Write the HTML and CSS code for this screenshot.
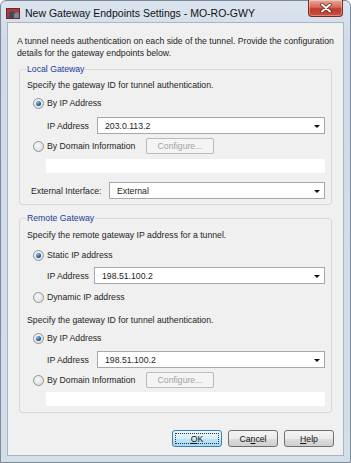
FILE: index.html
```html
<!DOCTYPE html>
<html>
<head>
<meta charset="utf-8">
<link rel="stylesheet" href="styles.css">
</head>
<body>
<div class="window">
  <div class="titlebar">
    <svg class="app-icon" width="14" height="11" viewBox="0 0 14 11">
      <rect x="0" y="0" width="14" height="11" fill="#6a2a2a"/>
      <rect x="1" y="1" width="12" height="9" fill="#a83b3b"/>
      <path d="M3 10 L3 5 L6 3 L9 5 L9 10 Z" fill="#3f4a5a"/>
      <path d="M8 10 L8 6 L11 4 L13 6 L13 10 Z" fill="#7d8896"/>
    </svg>
    <span class="title">New Gateway Endpoints Settings - MO-RO-GWY</span>
    <div class="close-btn">
      <svg width="12" height="10" viewBox="0 0 12 10">
        <path d="M2 1.5 L10 8.5 M10 1.5 L2 8.5" stroke="#5a1c18" stroke-width="3.4" stroke-linecap="round"/>
        <path d="M2 1.5 L10 8.5 M10 1.5 L2 8.5" stroke="#ffffff" stroke-width="2" stroke-linecap="round"/>
      </svg>
    </div>
  </div>
  <div class="content">
    <p class="intro">A tunnel needs authentication on each side of the tunnel. Provide the configuration details for the gateway endpoints below.</p>

    <fieldset class="group">
      <legend class="group-title">Local Gateway</legend>
      <div class="group-body">
        <div class="hint hint-first">Specify the gateway ID for tunnel authentication.</div>
        <div class="radio-row mt3"><span class="radio checked"></span><span>By IP Address</span></div>
        <div class="field-row mt6"><span class="field-label">IP Address</span><div class="select"><span>203.0.113.2</span><i class="arrow"></i></div></div>
        <div class="radio-row mt4"><span class="radio"></span><span class="domain-label">By Domain Information</span><span class="btn-disabled">Configure...</span></div>
        <div class="blank mt5"></div>
        <div class="ext-row mt9"><span class="ext-label">External Interface:</span><div class="select"><span>External</span><i class="arrow"></i></div></div>
      </div>
    </fieldset>

    <fieldset class="group group-remote">
      <legend class="group-title">Remote Gateway</legend>
      <div class="group-body">
        <div class="hint hint-first">Specify the remote gateway IP address for a tunnel.</div>
        <div class="radio-row mt5"><span class="radio checked"></span><span>Static IP address</span></div>
        <div class="field-row mt4"><span class="field-label narrow">IP Address</span><div class="select"><span>198.51.100.2</span><i class="arrow"></i></div></div>
        <div class="radio-row mt5"><span class="radio"></span><span>Dynamic IP address</span></div>
        <div class="hint mt9">Specify the gateway ID for tunnel authentication.</div>
        <div class="radio-row mt3"><span class="radio checked"></span><span>By IP Address</span></div>
        <div class="field-row mt5"><span class="field-label">IP Address</span><div class="select"><span>198.51.100.2</span><i class="arrow"></i></div></div>
        <div class="radio-row mt4"><span class="radio"></span><span class="domain-label">By Domain Information</span><span class="btn-disabled">Configure...</span></div>
        <div class="blank mt4"></div>
      </div>
    </fieldset>

    <div class="actions">
      <span class="btn btn-default"><span class="focus"><u>O</u>K</span></span>
      <span class="btn">Ca<u>n</u>cel</span>
      <span class="btn"><u>H</u>elp</span>
    </div>
  </div>
</div>
</body>
</html>
```

FILE: styles.css
```css
* { box-sizing: border-box; }
html, body { margin: 0; padding: 0; }
body {
  width: 351px;
  height: 463px;
  overflow: hidden;
  background: #ffffff;
  font-family: "Liberation Sans", Arial, sans-serif;
  font-size: 8.7px;
  color: #1e1e1e;
}
.window {
  width: 351px;
  height: 463px;
  padding: 0 6px 6px 6px;
  background: linear-gradient(#dbe5f0, #cfdbe8 40px, #d3dee9);
  border: 1px solid #7d8997;
  border-radius: 6px 6px 0 0;
  display: flex;
  flex-direction: column;
}
.titlebar {
  height: 21px;
  display: flex;
  align-items: flex-start;
  margin-left: -1px;
}
.app-icon { margin-top: 7px; flex: none; }
.title {
  margin-left: 5px;
  margin-top: 6px;
  font-size: 10.5px;
  color: #111;
  white-space: nowrap;
}
.close-btn {
  margin-left: auto;
  margin-right: 1px;
  margin-top: -1px;
  width: 35px;
  height: 17px;
  border: 1px solid #7a2b24;
  border-top: none;
  border-radius: 0 0 4px 4px;
  background: linear-gradient(#e9a898, #d46a58 45%, #c2392c 55%, #c9503a);
  display: flex;
  align-items: center;
  justify-content: center;
  box-shadow: inset 0 0 0 1px rgba(255,255,255,0.35);
}
.content {
  flex: 1;
  background: #f0f0f0;
  border: 1px solid #a9b5c2;
  display: flex;
  flex-direction: column;
}
.intro {
  margin: 0;
  padding: 12px 8px 0 9px;
  line-height: 12px;
}
.group {
  margin: 4px 11px 0 11px;
  padding: 0 0 5px 0;
  border: 1px solid #d9d9d9;
  border-radius: 3px;
  min-width: 0;
}
.group-remote { margin-top: 7px; padding-bottom: 6px; }
.group-title {
  margin-left: 6px;
  padding: 0 1px;
  line-height: 13px;
  color: #1b3c98;
}
.group-body {
  padding: 0 6px 0 7px;
  display: flex;
  flex-direction: column;
}
.hint { line-height: 13px; }
.hint-first { margin-top: 3px; }
.group-remote .hint-first { margin-top: 4px; }
.mt3 { margin-top: 3px; }
.mt4 { margin-top: 4px; }
.mt5 { margin-top: 5px; }
.mt6 { margin-top: 6px; }
.mt9 { margin-top: 9px; }
.radio-row {
  height: 16px;
  display: flex;
  align-items: center;
  padding-left: 6px;
}
.radio {
  width: 11px;
  height: 11px;
  border-radius: 50%;
  border: 1px solid #8f9396;
  background: radial-gradient(circle at 40% 35%, #f7f7f7, #d9d9d9);
  margin-right: 3px;
  flex: none;
  display: flex;
  align-items: center;
  justify-content: center;
}
.radio.checked::after {
  content: "";
  width: 5px;
  height: 5px;
  border-radius: 50%;
  background: radial-gradient(circle at 35% 30%, #7fc3ee, #1c5d95 60%, #103d66);
}
.domain-label { width: 99px; flex: none; }
.btn-disabled {
  width: 68px;
  height: 16px;
  border: 1px solid #b8bcbf;
  border-radius: 2px;
  background: #f4f4f4;
  color: #a3a3a3;
  display: flex;
  align-items: center;
  justify-content: center;
}
.field-row {
  height: 17px;
  display: flex;
  align-items: center;
  padding-left: 20px;
}
.field-label { width: 50px; flex: none; }
.field-label.narrow { width: 47px; }
.select {
  flex: 1;
  height: 17px;
  background: #ffffff;
  border: 1px solid #a5a9ae;
  display: flex;
  align-items: center;
  padding-left: 7px;
  padding-right: 4px;
}
.select span { flex: 1; }
.arrow {
  width: 0;
  height: 0;
  border-left: 3px solid transparent;
  border-right: 3px solid transparent;
  border-top: 3px solid #111;
  margin-top: 1px;
}
.blank {
  height: 14px;
  margin-left: 19px;
  background: #ffffff;
}
.ext-row {
  height: 17px;
  display: flex;
  align-items: center;
  padding-left: 4px;
}
.ext-label { width: 78px; flex: none; }
.actions {
  margin-top: 17px;
  padding-right: 9px;
  display: flex;
  justify-content: flex-end;
  gap: 6px;
}
.btn {
  width: 50px;
  height: 17px;
  border: 1px solid #707070;
  border-radius: 3px;
  background: linear-gradient(#f4f4f4, #ebebeb 50%, #dddddd 51%, #cfcfcf);
  display: flex;
  align-items: center;
  justify-content: center;
  color: #111;
}
.btn u { text-decoration: underline; text-underline-offset: 1px; }
.btn-default {
  border-color: #3c7fb1;
  background: linear-gradient(#eaf6fd, #d9f0fc 50%, #bee6fd 51%, #a7d9f5);
  padding: 2px;
}
.focus {
  width: 100%;
  height: 100%;
  border: 1px dotted #333;
  display: flex;
  align-items: center;
  justify-content: center;
}
```
